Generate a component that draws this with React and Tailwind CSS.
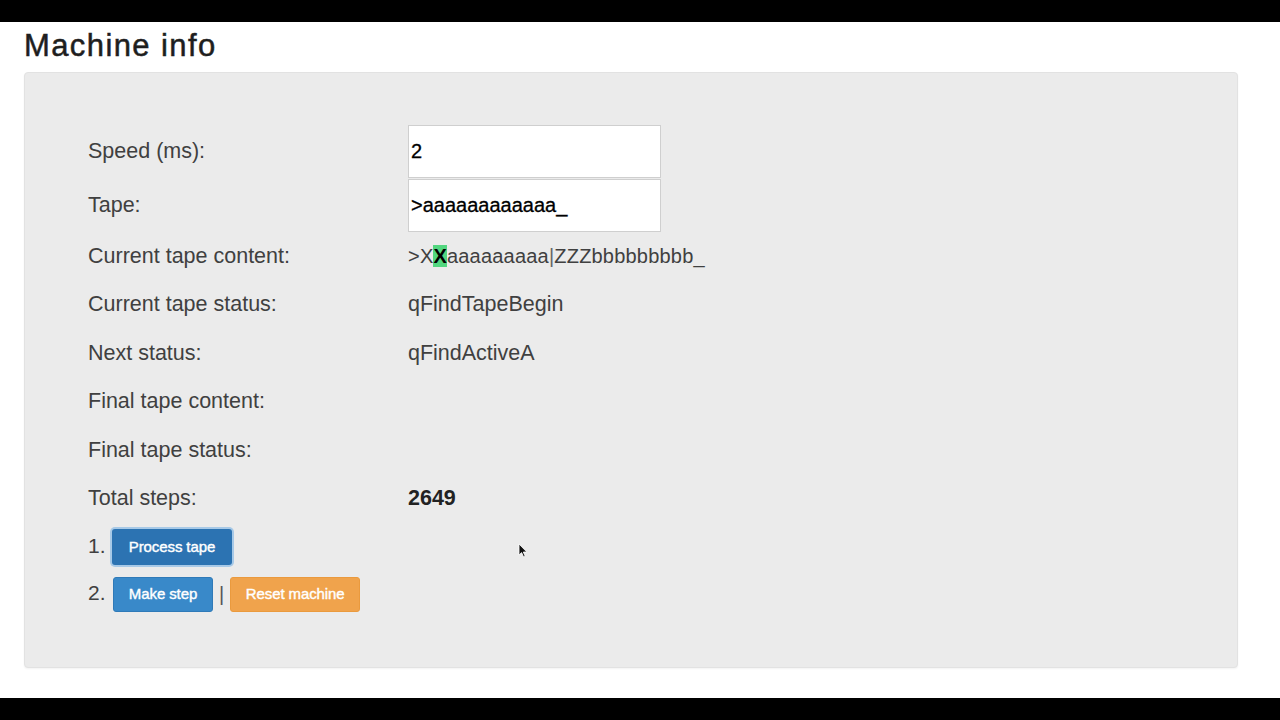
import React from "react";

const font = { fontFamily: '"Liberation Sans", Arial, sans-serif' };

const InfoRow = ({ label, children }) => (
  <div className="flex items-center h-[48.4px]">
    <div className="w-[320px] text-[21.5px] text-[#404040]">{label}</div>
    <div className="text-[21.5px] text-[#404040]">{children}</div>
  </div>
);

const InputRow = ({ label, value, className }) => (
  <div className={`flex items-center h-[53px] ${className || ""}`}>
    <div className="w-[320px] text-[21.5px] text-[#404040]">{label}</div>
    <input
      readOnly
      value={value}
      className="w-[253px] h-[53px] bg-white border border-[#cfcfcf] pl-[2px] text-[20px] text-black outline-none [-webkit-text-stroke:0.3px]"
      style={font}
    />
  </div>
);

export default function App() {
  return (
    <div className="h-screen flex flex-col bg-white overflow-hidden" style={font}>
      <div className="h-[22px] bg-black shrink-0" />

      <div className="h-[676px] px-[24px] shrink-0">
        {/* Title */}
        <div className="h-[48px] flex items-center">
          <h1 className="text-[31px] tracking-[1.4px] text-[#1e1e1e] [-webkit-text-stroke:0.5px]">
            Machine info
          </h1>
        </div>

        {/* Panel */}
        <div className="relative w-[1214px] h-[596px] mt-[2px] bg-[#ebebeb] border border-[#e2e2e2] rounded-[4px] shadow-[0_1px_2px_rgba(0,0,0,0.05)] pt-[52px] pl-[63px]">
          <InputRow label="Speed (ms):" value="2" />
          <InputRow label="Tape:" value=">aaaaaaaaaaaa_" className="mt-px" />

          <div>
            <InfoRow label="Current tape content:">
              <span className="text-[20px] tracking-[0.2px]">
                <span>&gt;X</span>
                <span className="bg-[#52d67f] font-bold text-black">X</span>
                <span>aaaaaaaaa</span>
                <span className="text-[#666]">|</span>
                <span>ZZZbbbbbbbbb_</span>
              </span>
            </InfoRow>
            <InfoRow label="Current tape status:">qFindTapeBegin</InfoRow>
            <InfoRow label="Next status:">qFindActiveA</InfoRow>
            <InfoRow label="Final tape content:" />
            <InfoRow label="Final tape status:" />
            <InfoRow label="Total steps:">
              <span className="font-bold text-[#222]">2649</span>
            </InfoRow>
          </div>

          {/* Actions */}
          <div className="flex items-center mt-[7px] h-[36px]">
            <span className="w-[24px] text-[21px] text-[#404040] -mt-[3px]">1.</span>
            <button className="h-[36px] w-[120px] rounded-[3px] bg-[#2c73b2] ring-2 ring-[#a7c9e7] text-white text-[15px] tracking-[-0.1px] [-webkit-text-stroke:0.4px]">
              Process tape
            </button>
          </div>
          <div className="flex items-center mt-[11px] h-[36px]">
            <span className="w-[25px] text-[21px] text-[#404040] -mt-[3px]">2.</span>
            <button className="h-[35px] w-[100px] rounded-[3px] bg-[#3989c9] border border-[#2f7ab8] text-white text-[15px] tracking-[-0.1px] [-webkit-text-stroke:0.4px]">
              Make step
            </button>
            <span className="mx-[6px] text-[20px] text-[#555]">|</span>
            <button className="h-[35px] w-[130px] rounded-[3px] bg-[#f0a34c] border border-[#ea9a3e] text-white text-[15px] tracking-[-0.1px] [-webkit-text-stroke:0.4px]">
              Reset machine
            </button>
          </div>

          {/* mouse pointer */}
          <svg
            className="absolute left-[493px] top-[470px]"
            width="10"
            height="15"
            viewBox="0 0 10 15"
          >
            <path d="M1 1 L1 12 L3.6 9.6 L5.6 14 L7.2 13.3 L5.3 9 L8.8 9 Z" fill="#111" stroke="#fff" strokeWidth="0.8" />
          </svg>
        </div>
      </div>

      <div className="h-[22px] bg-black shrink-0" />
    </div>
  );
}
